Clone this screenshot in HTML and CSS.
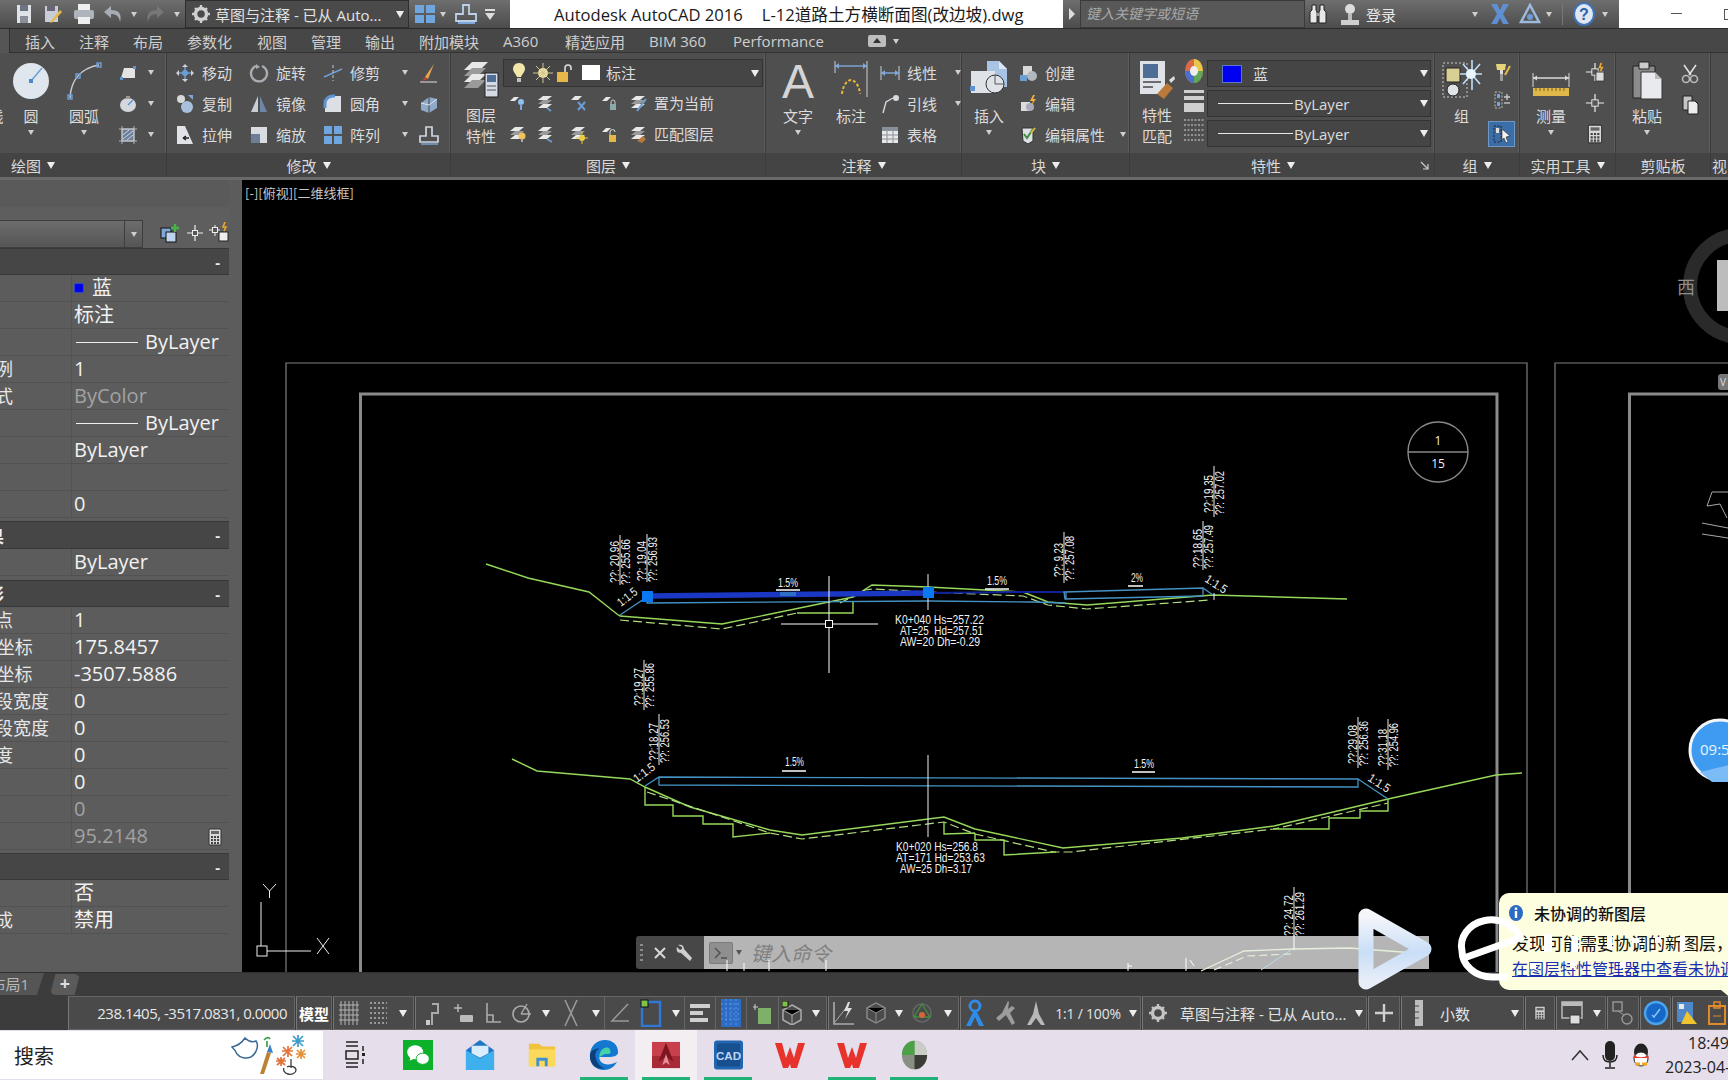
FILE: index.html
```html
<!DOCTYPE html>
<html lang="zh">
<head>
<meta charset="utf-8">
<title>Autodesk AutoCAD 2016</title>
<link rel="stylesheet" href="styles.css">
</head>
<body>
<svg class="defs" width="0" height="0">
  <symbol id="ly" viewBox="0 0 20 20"><path d="M3 7 8 3h9l-5 4z" fill="#e8e8e8"/><path d="M3 11 8 7h9l-5 4z" fill="#9a9a9a"/><path d="M3 15l5-4h9l-5 4z" fill="#e8e8e8"/></symbol>
  <symbol id="cal" viewBox="0 0 14 18"><rect x="1" y="1" width="12" height="16" rx="1" fill="#d8d8d8" stroke="#333"/><rect x="3" y="3" width="8" height="3" fill="#666"/><path d="M3 8h2v2H3zM6 8h2v2H6zM9 8h2v2H9zM3 11h2v2H3zM6 11h2v2H6zM9 11h2v2H9zM3 14h2v2H3zM6 14h2v2H6zM9 14h2v2H9z" fill="#444"/></symbol>
  <symbol id="pt" viewBox="0 0 22 22"><path d="M1 11h20M11 1v20" stroke="#eee" stroke-width="1.3"/><rect x="7.5" y="7.5" width="7" height="7" fill="#555" stroke="#eee"/></symbol>
</svg>
<div class="app">

  <header class="titlebar">
    <div class="qat">
      <span class="qi q1"><svg width="18" height="20" viewBox="0 0 18 20"><path d="M2 1h14v18H2z" fill="#dfe3e8"/><path d="M5 1h8v6H5z" fill="#6c7480"/><path d="M5 12h8v7H5z" fill="#8a8f98"/></svg></span>
      <span class="qi q2"><svg width="20" height="20" viewBox="0 0 20 20"><path d="M2 2h13v16H2z" fill="#c9ced6"/><path d="M4 2h8v5H4z" fill="#667"/><path d="m8 17 9-11 2 2-9 10-3 1z" fill="#e7b94a"/></svg></span>
      <span class="qi q3"><svg width="22" height="22" viewBox="0 0 22 22"><path d="M5 1h12v7H5z" fill="#eee"/><rect x="1" y="7" width="20" height="9" rx="2" fill="#aeb4bc"/><path d="M5 14h12v7H5z" fill="#eee"/></svg></span>
      <span class="qi q4"><svg width="22" height="20" viewBox="0 0 22 20"><path d="M9 2 2 8l7 6v-4c5 0 8 2 9 8 2-8-1-12-9-12z" fill="#a7adb5"/></svg></span>
      <span class="caret q5"></span>
      <span class="qi q6"><svg width="22" height="20" viewBox="0 0 22 20"><path d="m13 2 7 6-7 6v-4c-5 0-8 2-9 8-2-8 1-12 9-12z" fill="#777"/></svg></span>
      <span class="caret q7"></span>
      <div class="wscombo">
        <svg width="18" height="18" viewBox="0 0 18 18"><circle cx="9" cy="9" r="5.5" fill="none" stroke="#d0d0d0" stroke-width="3.5"/><path d="M9 0v3M9 15v3M0 9h3M15 9h3M3 3l2 2M13 13l2 2M15 3l-2 2M3 15l2-2" stroke="#d0d0d0" stroke-width="2.4"/></svg>
        <span class="wstext">草图与注释 - 已从 Auto...</span>
        <span class="caret white"></span>
      </div>
      <span class="qi q8"><svg width="22" height="22" viewBox="0 0 22 22"><path d="M1 2h9v8H1zM12 2h9v8h-9zM12 12h9v8h-9zM1 12h9v8H1z" fill="#6fa6e0"/></svg></span>
      <span class="caret q9"></span>
      <span class="qi q10"><svg width="24" height="22" viewBox="0 0 24 22"><path d="M9 2h6v9h7v7H2v-7h7z" fill="none" stroke="#bcd0e8" stroke-width="1.8"/><path d="M4 20h17" stroke="#7ea6d8" stroke-width="2"/></svg></span>
      <span class="downbar"></span>
    </div>
    <div class="doctitle"><span>Autodesk AutoCAD 2016</span><span class="dt-gap">L-12道路土方横断面图(改边坡).dwg</span></div>
    <div class="searchzone">
      <span class="tri-r"></span>
      <div class="keybox">键入关键字或短语</div>
      <span class="sz-ico sz1"><svg width="20" height="22" viewBox="0 0 20 22"><path d="M4 2h4v5l1 2v11H2V9l2-2zM12 2h4v5l2 2v11h-7V9l1-2z" fill="#e8e8e8" stroke="#222"/><path d="M8 10h4v3H8z" fill="#999"/></svg></span>
      <span class="sz-ico sz2"><svg width="22" height="24" viewBox="0 0 22 24"><circle cx="11" cy="7" r="5" fill="#dcdcdc"/><path d="M9 12h4v6H9z" fill="#bbb"/><path d="M2 18h18v5H2z" fill="#cfcfcf"/></svg></span>
      <span class="login">登录</span>
      <span class="caret sz3"></span>
      <span class="sz-ico sz4"><svg width="20" height="22" viewBox="0 0 20 22"><path d="M1 1h6l3 6 3-6h6l-6 10 6 10h-6l-3-6-3 6H1l6-10z" fill="#5f8fd0"/></svg></span>
      <span class="sz-ico sz5"><svg width="22" height="22" viewBox="0 0 22 22"><path d="M11 2 20 19H2z" fill="none" stroke="#9db9dc" stroke-width="2.5"/><circle cx="11" cy="14" r="3" fill="#6f9bd4"/></svg></span>
      <span class="caret sz6"></span>
      <span class="sz-sep"></span>
      <span class="sz-ico sz7"><svg width="22" height="24" viewBox="0 0 22 24"><ellipse cx="11" cy="12" rx="10" ry="11" fill="#dfe7f2" stroke="#3e72b4" stroke-width="2"/><text x="11" y="18" class="helpq">?</text></svg></span>
      <span class="caret sz8"></span>
    </div>
    <div class="winctl"><span class="mindash"></span><span class="maxbox"></span></div>
  </header>

  <nav class="tabs">
    <span class="tabhome"></span>
    <span class="tab t1">插入</span><span class="tab t2">注释</span><span class="tab t2">布局</span><span class="tab t3">参数化</span><span class="tab t2">视图</span><span class="tab t2">管理</span><span class="tab t2">输出</span><span class="tab t4">附加模块</span><span class="tab t5">A360</span><span class="tab t6">精选应用</span><span class="tab t7">BIM 360</span><span class="tab t8">Performance</span>
    <span class="tabpill"><svg width="18" height="12" viewBox="0 0 18 12"><rect width="18" height="12" rx="2" fill="#bdbdbd"/><path d="m9 3 4 5H5z" fill="#333"/></svg></span><span class="caret"></span>
  </nav>

  <section class="ribbon">
    <div class="panel p-draw">
      <div class="pbody">
        <div class="big b-pl"><div class="bico"></div><span class="blabel">多段线</span></div>
        <div class="big b-circle"><div class="bico"><svg width="38" height="38" viewBox="0 0 38 38"><circle cx="19" cy="19" r="18" fill="#dfe6ee"/><path d="M19 19 30 6" stroke="#6c9fd6" stroke-width="1.5"/><rect x="17" y="17" width="4" height="4" fill="#4f86c6"/></svg></div><span class="blabel">圆</span><span class="caret"></span></div>
        <div class="big b-arc"><div class="bico"><svg width="36" height="40" viewBox="0 0 36 40"><path d="M4 37C5 18 16 7 33 4" fill="none" stroke="#c9ced6" stroke-width="1.5"/><path d="M2 34h4v4H2zM10 13h4v4h-4zM31 2h4v4h-4z" fill="none" stroke="#6c9fd6" stroke-width="1.4"/></svg></div><span class="blabel">圆弧</span><span class="caret"></span></div>
        <div class="rows r-draw">
          <div class="tool"><svg class="i" viewBox="0 0 20 20"><path d="M3 15 6 5h11v10z" fill="#e4e4e4"/><path d="M2 14h3v3H2zM15 3h3v3h-3z" fill="#5d93d0"/></svg><span class="caret ca-draw"></span></div>
          <div class="tool"><svg class="i" viewBox="0 0 20 20"><ellipse cx="10" cy="11" rx="8" ry="7" fill="#d4d8de"/><path d="M10 11 15 6" stroke="#5d93d0" stroke-width="1.5"/><path d="M8 2h4v3H8z" fill="#999"/></svg><span class="caret ca-draw"></span></div>
          <div class="tool"><svg class="i" viewBox="0 0 20 20"><path d="M4 4h12v12H4z" fill="#6d7f99" stroke="#c8ccd2"/><path d="M5 14 15 6M5 10l6-5M9 15l6-5" stroke="#c9d4e2"/><path d="M1 4h18M1 16h18M4 1v18M16 1v18" stroke="#c8ccd2" stroke-width=".8"/></svg><span class="caret ca-draw"></span></div>
        </div>
      </div>
      <div class="ptitle">绘图<span class="caret white"></span></div>
    </div>

    <div class="panel p-mod">
      <div class="pbody">
        <div class="rows r-mod">
          <div class="tool"><svg class="i" viewBox="0 0 20 20"><path d="m10 1 3 3H7zM10 19l-3-3h6zM1 10l3-3v6zM19 10l-3 3V7z" fill="#cfd3d8"/><path d="M10 4v12M4 10h12" stroke="#6c9fd6" stroke-width="1.5"/><circle cx="10" cy="10" r="3" fill="#6c9fd6"/></svg><span>移动</span></div>
          <div class="tool"><svg class="i" viewBox="0 0 20 20"><path d="M13 3a8 8 0 1 1-6 0" fill="none" stroke="#a9adb2" stroke-width="2.4"/><path d="M7 1v5l4-2z" fill="#a9adb2"/></svg><span>旋转</span></div>
          <div class="tool"><svg class="i" viewBox="0 0 20 20"><path d="M1 14 19 6" stroke="#6c9fd6" stroke-width="1.5"/><path d="M10 2v16" stroke="#c5c9ce" stroke-dasharray="3 2"/></svg><span>修剪</span><span class="caret ca-mod"></span></div>
          <div class="tool"><svg class="i" viewBox="0 0 20 20"><path d="M15 1 6 14l3 2z" fill="#e8a84a"/><path d="M6 14 3 18l6-2z" fill="#c0492b"/><path d="M1 19h17" stroke="#e0e0e0"/></svg></div>

          <div class="tool"><svg class="i" viewBox="0 0 20 20"><circle cx="6" cy="5" r="4" fill="#d8d8d8"/><circle cx="12" cy="13" r="6" fill="#a9c0dc"/><path d="M13 1h5v5z" fill="#7fa6d4"/></svg><span>复制</span></div>
          <div class="tool"><svg class="i" viewBox="0 0 20 20"><path d="M9 2v16H2z" fill="#c9ced4"/><path d="M11 2v16h7z" fill="#6d87a8"/></svg><span>镜像</span></div>
          <div class="tool"><svg class="i" viewBox="0 0 20 20"><path d="M2 18V9c0-4 4-7 8-7h8v16z" fill="#dcdfe3"/><path d="M2 14V9c0-4 4-7 8-7h2" fill="none" stroke="#5d93d0" stroke-width="3"/></svg><span>圆角</span><span class="caret ca-mod"></span></div>
          <div class="tool"><svg class="i" viewBox="0 0 20 20"><path d="M2 9 10 3l8 2v9l-8 5-8-3z" fill="#8fa9c8"/><path d="M10 3v16" stroke="#444"/><path d="M2 9l8 2 8-6" fill="none" stroke="#dfe6ee"/></svg></div>

          <div class="tool"><svg class="i" viewBox="0 0 20 20"><path d="M2 1h8l8 18H2z" fill="#dfe3e8"/><path d="M8 13h6M8 13l3-2M8 13l3 2" stroke="#222" stroke-width="1.5"/></svg><span>拉伸</span></div>
          <div class="tool"><svg class="i" viewBox="0 0 20 20"><path d="M2 2h16v16H2z" fill="#d9dde2"/><path d="M2 9h9v9H2z" fill="#6c7f96"/></svg><span>缩放</span></div>
          <div class="tool"><svg class="i" viewBox="0 0 20 20"><path d="M1 1h8v8H1zM11 1h8v8h-8zM1 11h8v8H1zM11 11h8v8h-8z" fill="#6fa6e0"/></svg><span>阵列</span><span class="caret ca-mod"></span></div>
          <div class="tool"><svg class="i" viewBox="0 0 20 20"><path d="M7 2h6v9h6v6H1v-6h6z" fill="none" stroke="#cfd6de" stroke-width="1.7"/><path d="M2 19h17" stroke="#7ea6d8" stroke-width="1.4"/></svg></div>
        </div>
      </div>
      <div class="ptitle">修改<span class="caret white"></span></div>
    </div>

    <div class="panel p-lay">
      <div class="pbody">
        <div class="big b-lay"><div class="bico"><svg width="36" height="38" viewBox="0 0 36 38"><path d="M1 10 9 2h16l-8 8z" fill="#e8e8e8"/><path d="M1 16l8-8h14l-8 8z" fill="#9a9a9a"/><path d="M1 22l8-8h14l-8 8z" fill="#e8e8e8"/><path d="M1 28l8-8h14l-8 8z" fill="#9a9a9a"/><rect x="22" y="13" width="13" height="24" fill="#d4dbe4" stroke="#222"/><rect x="24" y="15" width="9" height="7" fill="#4f6e96"/><path d="M24 26h9M24 30h9" stroke="#555"/></svg></div><span class="blabel two">图层<br>特性</span></div>
        <div class="laycol">
          <div class="laycombo">
            <svg class="lc1" width="14" height="22" viewBox="0 0 14 22"><path d="M7 1C3 1 1 4 1 7c0 3 3 5 4 8h4c1-3 4-5 4-8 0-3-2-6-6-6z" fill="#f2e6a8"/><path d="M5 16h4v4H5z" fill="#bfbfbf"/></svg>
            <svg class="lc2" width="20" height="20" viewBox="0 0 20 20"><circle cx="10" cy="10" r="5" fill="#efe2a2"/><path d="M10 0v20M0 10h20M3 3l14 14M17 3 3 17" stroke="#cfc68e"/></svg>
            <svg class="lc3" width="16" height="20" viewBox="0 0 16 20"><rect x="1" y="9" width="11" height="10" fill="#e6b64a"/><path d="M9 9V5a3 3 0 0 1 6 0v2" fill="none" stroke="#ddd" stroke-width="1.6"/></svg>
            <span class="lc-sq"></span><span class="lc-t">标注</span><span class="caret white lc-c"></span>
          </div>
          <div class="layrow">
            <svg class="i" viewBox="0 0 20 20"><path d="M3 8 7 4h5L8 8z" fill="#e8e8e8"/><circle cx="14" cy="9" r="3" fill="#8fc0ee"/><path d="M13 11h2v6h-2z" fill="#7fa6d4"/></svg>
            <svg class="i" viewBox="0 0 20 20"><use href="#ly"/><path d="m12 15 4 3" stroke="#6c9fd6" stroke-width="1.6"/></svg>
            <svg class="i" viewBox="0 0 20 20"><path d="M3 7 7 3h7l-4 4z" fill="#e8e8e8"/><path d="M10 9 17 17M17 9l-7 8" stroke="#6c9fd6" stroke-width="2"/></svg>
            <svg class="i" viewBox="0 0 20 20"><path d="M3 8 7 4h5L8 8z" fill="#e8e8e8"/><rect x="11" y="11" width="6" height="6" fill="#8aa"/><path d="M12 11V9a2 2 0 0 1 4 0v2" fill="none" stroke="#ccc"/></svg>
            <svg class="i" viewBox="0 0 20 20"><use href="#ly"/><path d="m9 18 9-12" stroke="#6c9fd6" stroke-width="2"/></svg>
            <span>置为当前</span>
          </div>
          <div class="layrow">
            <svg class="i" viewBox="0 0 20 20"><use href="#ly"/><circle cx="15" cy="12" r="3.5" fill="#efc35a"/><path d="M14 15h2v3h-2z" fill="#aaa"/></svg>
            <svg class="i" viewBox="0 0 20 20"><use href="#ly"/><path d="m12 15 5 3" stroke="#6c9fd6" stroke-width="1.8"/></svg>
            <svg class="i" viewBox="0 0 20 20"><use href="#ly"/><circle cx="14" cy="14" r="3" fill="#f0d04a"/><path d="M14 8v12M8 14h12" stroke="#e8c83a"/></svg>
            <svg class="i" viewBox="0 0 20 20"><path d="M3 8 7 4h5L8 8z" fill="#e8e8e8"/><rect x="10" y="11" width="7" height="7" fill="#e6b64a"/><path d="M11 11V8a2.5 2.5 0 0 1 5 0" fill="none" stroke="#ddd"/></svg>
            <svg class="i" viewBox="0 0 20 20"><use href="#ly"/><path d="m9 17 6-5 3 3-4 4z" fill="#b9793a"/></svg>
            <span>匹配图层</span>
          </div>
        </div>
      </div>
      <div class="ptitle">图层<span class="caret white"></span></div>
    </div>

    <div class="panel p-ann">
      <div class="pbody">
        <div class="big b-a"><div class="bico"><span class="bigA">A</span></div><span class="blabel">文字</span><span class="caret"></span></div>
        <div class="big b-dim"><div class="bico"><svg width="34" height="38" viewBox="0 0 34 38"><path d="M1 6h32" stroke="#7ea6d8" stroke-width="1.4"/><path d="M1 1v12M33 1v36" stroke="#c9ced6"/><path d="M1 6l4-3v6zM33 6l-4-3v6z" fill="#7ea6d8"/><path d="M8 34c1-10 6-14 9-14s8 4 9 14" fill="none" stroke="#e8b83a" stroke-width="2" stroke-dasharray="3 2"/></svg></div><span class="blabel">标注</span></div>
        <div class="rows r-ann">
          <div class="tool"><svg class="i" viewBox="0 0 20 20"><path d="M1 3v14M19 3v14" stroke="#c9ced6"/><path d="M1 10h18" stroke="#7ea6d8" stroke-width="1.5"/><path d="m1 10 4-3v6zM19 10l-4-3v6z" fill="#7ea6d8"/></svg><span>线性</span><span class="caret ca-ann"></span></div>
          <div class="tool"><svg class="i" viewBox="0 0 20 20"><path d="M3 19 6 8l7-4" fill="none" stroke="#d4d8de" stroke-width="1.4"/><circle cx="16" cy="4" r="3" fill="#d8dbe0"/></svg><span>引线</span><span class="caret ca-ann"></span></div>
          <div class="tool"><svg class="i" viewBox="0 0 20 20"><rect x="2" y="2" width="16" height="16" fill="#e6e8ea"/><path d="M2 2h16v4H2z" fill="#8a9098"/><path d="M7 6v12M13 6v12M2 10h16M2 14h16" stroke="#8a9098"/></svg><span>表格</span></div>
        </div>
      </div>
      <div class="ptitle">注释<span class="caret white"></span></div>
    </div>

    <div class="panel p-blk">
      <div class="pbody">
        <div class="big b-ins"><div class="bico"><svg width="40" height="36" viewBox="0 0 40 36"><path d="M18 1h12l8 8v18H18z" fill="#a8c3e4"/><path d="M30 1v8h8" fill="#dce6f2"/><path d="M2 11h24v22H2z" fill="#dfe2e6"/><circle cx="26" cy="24" r="9" fill="#dfe2e6" stroke="#333"/><path d="M26 24V15M26 24h9" stroke="#555"/><rect x="1" y="26" width="5" height="5" fill="#5d93d0"/></svg></div><span class="blabel">插入</span><span class="caret"></span></div>
        <div class="rows r-blk">
          <div class="tool"><svg class="i" viewBox="0 0 20 20"><path d="M5 3h9v9H5z" fill="#d8d8d8"/><circle cx="14" cy="13" r="5" fill="#b3b8be"/><rect x="2" y="12" width="7" height="6" fill="#6c9fd6"/></svg><span>创建</span></div>
          <div class="tool"><svg class="i" viewBox="0 0 20 20"><path d="M3 8h9v9H3z" fill="#dcdcdc"/><circle cx="12" cy="13" r="4" fill="#aab"/><path d="M15 1 12 7h3l-2 5 5-7h-3l2-4z" fill="#f0b23a"/></svg><span>编辑</span></div>
          <div class="tool"><svg class="i" viewBox="0 0 20 20"><path d="M4 3h11v13l-5 3-5-3z" fill="#dde0e4" stroke="#333"/><path d="m6 9 3 4 6-9" fill="none" stroke="#3f8f3f" stroke-width="2"/><path d="m13 8 4-5" stroke="#e5b43b" stroke-width="2"/></svg><span>编辑属性</span><span class="caret ca-blk"></span></div>
        </div>
      </div>
      <div class="ptitle">块<span class="caret white"></span></div>
    </div>

    <div class="panel p-prop">
      <div class="pbody">
        <div class="big b-match"><div class="bico"><svg width="36" height="40" viewBox="0 0 36 40"><path d="M1 1h25v33H1z" fill="#dfe3e8"/><path d="M4 4h15v14H4z" fill="#4f6e96"/><path d="M4 22h18M4 27h10" stroke="#444" stroke-width="1.4"/><path d="m18 34 10-11 6 5-9 11z" fill="#b9793a"/><path d="m30 20 5-4 1 3-4 4z" fill="#ddd"/></svg></div><span class="blabel two">特性<br>匹配</span></div>
        <div class="pswatch">
          <svg width="20" height="26" viewBox="0 0 20 26"><ellipse cx="10" cy="13" rx="9" ry="12" fill="#d96a4a"/><path d="M10 13V1a9 12 0 0 1 9 12z" fill="#e8c84a"/><path d="M10 13h9a9 12 0 0 1-9 12z" fill="#5fa85a"/><path d="M10 13v12a9 12 0 0 1-9-12z" fill="#4a6fd0"/><ellipse cx="10" cy="13" rx="4" ry="5" fill="#eee"/></svg>
          <svg width="20" height="24" viewBox="0 0 20 24"><path d="M0 1h20v3H0zM0 7h20v4H0zM0 14h20v9H0z" fill="#cfcfcf"/></svg>
          <svg width="20" height="24" viewBox="0 0 20 24"><path d="M0 2h20M0 7h20M0 12h20M0 17h20M0 22h20" stroke="#aaa" stroke-width="1.6" stroke-dasharray="2 1.5"/></svg>
        </div>
        <div class="combos">
          <div class="combo"><span class="bluesq"></span><span class="cb-t">蓝</span><span class="caret white cb-c"></span></div>
          <div class="combo"><span class="cb-line"></span><span class="cb-bl">ByLayer</span><span class="caret white cb-c"></span></div>
          <div class="combo"><span class="cb-line"></span><span class="cb-bl">ByLayer</span><span class="caret white cb-c"></span></div>
        </div>
      </div>
      <div class="ptitle">特性<span class="caret white"></span><svg class="launch" width="9" height="9" viewBox="0 0 9 9"><path d="M1 1 8 8M8 3v5H3" fill="none" stroke="#ccc" stroke-width="1.2"/></svg></div>
    </div>

    <div class="panel p-grp">
      <div class="pbody">
        <div class="big b-grp"><div class="bico"><svg width="40" height="40" viewBox="0 0 40 40"><path d="M1 3h24v34H1z" fill="none" stroke="#ccc" stroke-dasharray="2 2"/><path d="M4 8h14v14H4z" fill="#d8cf92" stroke="#222"/><circle cx="11" cy="30" r="6" fill="#dfe3e8" stroke="#222"/><path d="M30 0v30M18 14h22M21 4l17 20M38 4 21 24" stroke="#bfe0fa" stroke-width="1.6"/><circle cx="29" cy="14" r="5" fill="#e8f5ff"/></svg></div><span class="blabel">组</span></div>
        <div class="grpcol">
          <svg class="i" viewBox="0 0 20 20"><path d="M4 2h10l-1 6H5z" fill="#e7d47a"/><path d="M8 8h3v4H8z" fill="#ddd"/><path d="M8 12h3v7H8z" fill="#999"/><path d="m13 13 5-9" stroke="#e7b94a" stroke-width="2"/></svg>
          <svg class="i" viewBox="0 0 20 20"><path d="M3 2h7v16H3z" fill="none" stroke="#bbb" stroke-dasharray="2 1.5"/><path d="M5 4h3v4H5zM5 12h3v4H5z" fill="#6fa6e0"/><path d="M12 7h6M15 4v6" stroke="#ccc" stroke-width="1.3"/><path d="M12 13h6" stroke="#ccc" stroke-width="1.3"/></svg>
          <span class="grp-on"><svg class="i" viewBox="0 0 20 20"><path d="M2 2h7v16H2z" fill="none" stroke="#222" stroke-dasharray="2 1.5"/><path d="M4 4h3v5H4z" fill="#ddd"/><path d="m10 5 8 7-4 1 2 5-2 1-2-5-2 2z" fill="#f2f2f2" stroke="#222" stroke-width=".6"/></svg></span>
        </div>
      </div>
      <div class="ptitle">组<span class="caret white"></span></div>
    </div>

    <div class="panel p-util">
      <div class="pbody">
        <div class="big b-meas"><div class="bico"><svg width="38" height="30" viewBox="0 0 38 30"><path d="M1 5v14M37 5v14" stroke="#d8d8d8"/><path d="M1 10h36" stroke="#d8d8d8" stroke-width="1.3"/><path d="m1 10 4-2.5v5zM37 10l-4-2.5v5z" fill="#d8d8d8"/><rect x="1" y="20" width="36" height="8" fill="#e0b84a"/><path d="M4 20v3M8 20v3M12 20v3M16 20v3M20 20v3M24 20v3M28 20v3M32 20v3" stroke="#7a5f1e"/></svg></div><span class="blabel">测量</span><span class="caret"></span></div>
        <div class="utilcol">
          <svg class="i" viewBox="0 0 22 22"><use href="#pt"/><rect x="12" y="11" width="9" height="10" fill="#ddd" stroke="#333"/><path d="M18 1 16 6h3l-2 4" fill="none" stroke="#eea72e" stroke-width="1.8"/></svg>
          <svg class="i" viewBox="0 0 22 22"><use href="#pt"/></svg>
          <svg class="i" viewBox="0 0 14 18"><use href="#cal"/></svg>
        </div>
      </div>
      <div class="ptitle">实用工具<span class="caret white"></span></div>
    </div>

    <div class="panel p-clip">
      <div class="pbody">
        <div class="big b-paste"><div class="bico"><svg width="32" height="40" viewBox="0 0 32 40"><path d="M2 6h22v32H2z" fill="#8b8b8b" stroke="#222"/><path d="M8 2h10v7H8z" fill="#ccc" stroke="#222"/><path d="M10 12h14l7 7v20H10z" fill="#e8eaed" stroke="#333"/><path d="M24 12v7h7" fill="#bbb"/></svg></div><span class="blabel">粘贴</span><span class="caret"></span></div>
        <div class="clipcol">
          <svg class="i" viewBox="0 0 20 20"><path d="M4 1l7 10M16 1 9 11" stroke="#dfdfdf" stroke-width="1.6"/><circle cx="6" cy="15" r="3.5" fill="none" stroke="#bbb" stroke-width="1.6"/><circle cx="14" cy="15" r="3.5" fill="none" stroke="#bbb" stroke-width="1.6"/></svg>
          <svg class="i" viewBox="0 0 20 20"><path d="M3 1h9v14H3z" fill="#c5c5c5" stroke="#222"/><path d="M8 6h7l3 3v10H8z" fill="#eee" stroke="#222"/></svg>
        </div>
      </div>
      <div class="ptitle">剪贴板</div>
    </div>

    <div class="panel p-view"><div class="pbody"></div><div class="ptitle">视图</div></div>
  </section>
  <div class="strip"></div>

  <main class="workspace">
    <aside class="palette">
      <div class="pal-top">
        <div class="pal-combo"><span class="pal-drop"><span class="caret"></span></span></div>
        <svg class="pal-i1" width="20" height="20" viewBox="0 0 20 20"><rect x="1" y="5" width="10" height="10" fill="#7ea6d8" stroke="#111"/><rect x="6" y="9" width="10" height="10" fill="#bcd3ee" stroke="#111"/><path d="M15 1v8M11 5h8" stroke="#49b04a" stroke-width="2.4"/></svg>
        <svg class="pal-i2" width="16" height="16" viewBox="0 0 16 16"><path d="M0 8h16M8 0v16" stroke="#eee" stroke-width="1.2"/><rect x="5.5" y="5.5" width="5" height="5" fill="#555" stroke="#eee"/></svg>
        <svg class="pal-i3" width="20" height="20" viewBox="0 0 20 20"><path d="M0 8h11M6 3v11" stroke="#eee"/><rect x="3.500" y="5.500" width="5" height="5" fill="#555" stroke="#eee"/><rect x="10" y="10" width="9" height="9" fill="#eee" stroke="#222"/><path d="M16 0 14 5h3l-2 4" fill="none" stroke="#eea72e" stroke-width="1.6"/></svg>
      </div>
      <div class="sec-h"><span class="sh-l">常规</span><b>-</b></div>
      <div class="prow"><span class="pk">颜色</span><span class="pv"><i class="pblue"></i>蓝</span></div>
      <div class="prow"><span class="pk">图层</span><span class="pv">标注</span></div>
      <div class="prow"><span class="pk">线型</span><span class="pv"><i class="pline"></i>ByLayer</span></div>
      <div class="prow"><span class="pk">线型比例</span><span class="pv">1</span></div>
      <div class="prow"><span class="pk">打印样式</span><span class="pv dim">ByColor</span></div>
      <div class="prow"><span class="pk">线宽</span><span class="pv"><i class="pline"></i>ByLayer</span></div>
      <div class="prow"><span class="pk">透明度</span><span class="pv">ByLayer</span></div>
      <div class="prow"><span class="pk">超链接</span><span class="pv"></span></div>
      <div class="prow"><span class="pk">厚度</span><span class="pv">0</span></div>
      <div class="sec-h sec-a"><span class="sh-l">三维效果</span><b>-</b></div>
      <div class="prow"><span class="pk">材质</span><span class="pv">ByLayer</span></div>
      <div class="sec-h sec-b"><span class="sh-l">几何图形</span><b>-</b></div>
      <div class="prow"><span class="pk">当前顶点</span><span class="pv">1</span></div>
      <div class="prow"><span class="pk">顶点 X 坐标</span><span class="pv">175.8457</span></div>
      <div class="prow"><span class="pk">顶点 Y 坐标</span><span class="pv">-3507.5886</span></div>
      <div class="prow"><span class="pk">起始线段宽度</span><span class="pv">0</span></div>
      <div class="prow"><span class="pk">终止线段宽度</span><span class="pv">0</span></div>
      <div class="prow"><span class="pk">全局宽度</span><span class="pv">0</span></div>
      <div class="prow"><span class="pk">标高</span><span class="pv">0</span></div>
      <div class="prow"><span class="pk">面积</span><span class="pv dim">0</span></div>
      <div class="prow"><span class="pk">长度</span><span class="pv dim">95.2148</span><svg class="pcalc" width="14" height="18" viewBox="0 0 14 18"><use href="#cal"/></svg></div>
      <div class="sec-h sec-gap"><span class="sh-l">其他</span><b>-</b></div>
      <div class="prow"><span class="pk">闭合</span><span class="pv">否</span></div>
      <div class="prow"><span class="pk">线型生成</span><span class="pv">禁用</span></div>
    </aside>

    <div class="canvas">
      <svg class="draw" width="1486" height="792" viewBox="242 180 1486 792">
        <text x="245" y="198" class="vplabel">[-][俯视][二维线框]</text>
        <!-- sheet frames -->
        <g class="frame-thin"><path d="M286 972V363H1527V972M1555 972V363H1728"/></g>
        <g class="frame-bold"><path d="M360.500 972V394H1497V972M1629.500 972V394H1728"/></g>
        <!-- section number -->
        <circle cx="1438" cy="452" r="30" class="num"/><path d="M1408 452h60" class="num"/>
        <text x="1438" y="445" class="numt">1</text><text x="1438" y="468" class="numt">15</text>
        <!-- view cube -->
        <circle cx="1741" cy="286" r="51" class="ring"/>
        <text x="1677" y="294" class="west">西</text>
        <rect x="1717" y="260" width="20" height="51" class="cube"/>
        <rect x="1718" y="374" width="14" height="16" rx="3" class="vbtn"/>
        <text x="1720" y="386" class="vbtnt">V</text>
        <!-- right sheet fragment -->
        <path d="M1728 492h-16l-5 14 13-2 7 14M1702 523l26 5M1702 534l26 4" class="frag"/>
        <!-- UCS -->
        <g class="ucs"><path d="M261 902V946M267 951h44"/><rect x="257" y="946" width="10" height="10"/></g>
        <path d="M263 884l6.500 7 6.500-7M269.500 891v7M317 938l12 16M329 938l-12 16" class="ucs2"/>

        <!-- section K0+040 -->
        <path d="M486 564 528 578 589 592 617 614 620 616 722 624 853 597 872 585 928 587 1023 592 1048 602 1087 605 1213 595 1347 599" class="g"/>
        <path d="M620 620 722 629 797 613M840 603 865 590 873 589 928 592 1023 596 1048 605 1087 609 1210 600" class="gd"/>
        <path d="M797 613H853V602" class="g"/>
        <path d="M647 596 928 593" class="sel"/>
        <path d="M928 593 1023 592 1064 592" class="sel2"/>
        <path d="M620 615 647 597V603L928 601 1033 602 1065 603M1064 592 1203 588V596L1065 599ZM1066 592V599M1203 588 1213 595" class="b"/>
        <rect x="780" y="592" width="16" height="4" class="patch"/>
        <rect x="642" y="591" width="11" height="11" class="grip"/><rect x="923" y="587" width="11" height="11" class="grip"/>
        <path d="M928 574V587M928 598V610M620 535V585M647 534V582M1064 532V583M1203 521V570M1214 466V517M1214 593V600" class="w"/>
        <path d="M776 590H800M985 589H1009M1128 586H1143" class="w2"/>
        <text x="778" y="587" textLength="20" lengthAdjust="spacingAndGlyphs" class="dt">1.5%</text>
        <text x="987" y="585" textLength="20" lengthAdjust="spacingAndGlyphs" class="dt">1.5%</text>
        <text x="1131" y="582" textLength="12" lengthAdjust="spacingAndGlyphs" class="dt">2%</text>
        <text transform="translate(621 607) rotate(-38)" textLength="22" lengthAdjust="spacingAndGlyphs" class="dt">1:1.5</text>
        <text transform="translate(1204 581) rotate(33)" textLength="24" lengthAdjust="spacingAndGlyphs" class="dt">1:1.5</text>
        <text transform="translate(619 583) rotate(-90)" textLength="42" lengthAdjust="spacingAndGlyphs" class="dt">??: 20.96</text>
        <text transform="translate(630 585) rotate(-90)" textLength="46" lengthAdjust="spacingAndGlyphs" class="dt">??: 255.66</text>
        <text transform="translate(646 581) rotate(-90)" textLength="40" lengthAdjust="spacingAndGlyphs" class="dt">??: 19.04</text>
        <text transform="translate(657 582) rotate(-90)" textLength="45" lengthAdjust="spacingAndGlyphs" class="dt">??: 256.93</text>
        <text transform="translate(1063 577) rotate(-90)" textLength="34" lengthAdjust="spacingAndGlyphs" class="dt">??: 9.23</text>
        <text transform="translate(1074 581) rotate(-90)" textLength="45" lengthAdjust="spacingAndGlyphs" class="dt">??: 257.08</text>
        <text transform="translate(1202 568) rotate(-90)" textLength="39" lengthAdjust="spacingAndGlyphs" class="dt">??:18.65</text>
        <text transform="translate(1213 569) rotate(-90)" textLength="44" lengthAdjust="spacingAndGlyphs" class="dt">??: 257.49</text>
        <text transform="translate(1213 513) rotate(-90)" textLength="38" lengthAdjust="spacingAndGlyphs" class="dt">??:19.35</text>
        <text transform="translate(1224 515) rotate(-90)" textLength="44" lengthAdjust="spacingAndGlyphs" class="dt">??: 257.02</text>
        <text x="895" y="624" textLength="89" lengthAdjust="spacingAndGlyphs" class="dt">K0+040 Hs=257.22</text>
        <text x="900" y="635" textLength="83" lengthAdjust="spacingAndGlyphs" class="dt">AT=25  Hd=257.51</text>
        <text x="900" y="646" textLength="80" lengthAdjust="spacingAndGlyphs" class="dt">AW=20 Dh=-0.29</text>
        <!-- crosshair -->
        <path d="M781 624H825.500M832.500 624H878M829 576V620.500M829 627.500V673" class="ch"/>
        <rect x="825.500" y="620.500" width="7" height="7" class="chb"/>

        <!-- section K0+020 -->
        <path d="M512 759 537 771 630 779 645 787 690 807 770 830 802 835 944 817 975 829 1063 848 1182 838 1274 826 1388 799 1496 775 1522 773" class="g"/>
        <path d="M647 792 770 833 802 839 944 822 975 834 1054 852 1071 852 1274 829 1388 803" class="gd"/>
        <path d="M645 787V805H673V816H703V824H733V837L770 833M944 822V834L975 833M975 833V840H1004V855L1056 852M1273 829H1329V818H1360V811H1388V799" class="g"/>
        <path d="M645 786 659 777 1358 779V787L659 785V777M1358 779 1388 799" class="b"/>
        <path d="M928 755V837M644 660V710M659 714V765M1358 717V768M1388 719V770" class="w"/>
        <path d="M782 771H806M1132 772H1155" class="w2"/>
        <text x="785" y="766" textLength="19" lengthAdjust="spacingAndGlyphs" class="dt">1.5%</text>
        <text x="1134" y="768" textLength="20" lengthAdjust="spacingAndGlyphs" class="dt">1.5%</text>
        <text transform="translate(637 783) rotate(-37)" textLength="24" lengthAdjust="spacingAndGlyphs" class="dt">1:1.5</text>
        <text transform="translate(1367 780) rotate(33)" textLength="24" lengthAdjust="spacingAndGlyphs" class="dt">1:1.5</text>
        <text transform="translate(643 706) rotate(-90)" textLength="38" lengthAdjust="spacingAndGlyphs" class="dt">??:19.27</text>
        <text transform="translate(654 708) rotate(-90)" textLength="45" lengthAdjust="spacingAndGlyphs" class="dt">??: 255.86</text>
        <text transform="translate(658 761) rotate(-90)" textLength="38" lengthAdjust="spacingAndGlyphs" class="dt">??:18.27</text>
        <text transform="translate(669 763) rotate(-90)" textLength="44" lengthAdjust="spacingAndGlyphs" class="dt">??: 256.53</text>
        <text transform="translate(1357 764) rotate(-90)" textLength="39" lengthAdjust="spacingAndGlyphs" class="dt">??:29.08</text>
        <text transform="translate(1368 766) rotate(-90)" textLength="45" lengthAdjust="spacingAndGlyphs" class="dt">??: 256.36</text>
        <text transform="translate(1387 766) rotate(-90)" textLength="37" lengthAdjust="spacingAndGlyphs" class="dt">??:31.18</text>
        <text transform="translate(1398 767) rotate(-90)" textLength="44" lengthAdjust="spacingAndGlyphs" class="dt">??: 254.96</text>
        <text x="896" y="851" textLength="82" lengthAdjust="spacingAndGlyphs" class="dt">K0+020 Hs=256.8</text>
        <text x="896" y="862" textLength="89" lengthAdjust="spacingAndGlyphs" class="dt">AT=171 Hd=253.63</text>
        <text x="900" y="873" textLength="72" lengthAdjust="spacingAndGlyphs" class="dt">AW=25 Dh=3.17</text>

        <!-- next section -->
        <path d="M1294 887V936" class="w"/>
        <text transform="translate(1293 936) rotate(-90)" textLength="41" lengthAdjust="spacingAndGlyphs" class="dt">??: 24.72</text>
        <text transform="translate(1304 936) rotate(-90)" textLength="44" lengthAdjust="spacingAndGlyphs" class="dt">??: 261.29</text>

        <!-- clock bubble -->
        <circle cx="1720" cy="750" r="30" class="clk"/>
        <path d="M1700 772 1750 760V782H1712Z" class="clk2"/>
        <text x="1700" y="755" class="clkt">09:5</text>
      </svg>

      <div class="cmd">
        <div class="cmd-dark">
          <span class="cmd-grip"></span>
          <svg width="14" height="14" viewBox="0 0 14 14"><path d="M2 2l10 10M12 2 2 12" stroke="#d8d8d8" stroke-width="2"/></svg>
          <svg width="20" height="20" viewBox="0 0 20 20"><path d="M3 2c3-1 6 0 6 4l8 9-2 3-9-8c-4 0-5-3-4-6l3 3 2-1 0-2z" fill="#cfcfcf"/></svg>
        </div>
        <div class="cmd-light">
          <span class="cmd-ico"><svg width="18" height="18" viewBox="0 0 18 18"><path d="M3 4l5 5-5 5" fill="none" stroke="#555" stroke-width="1.6"/><path d="M9 14h6" stroke="#555" stroke-width="1.6"/></svg></span>
          <span class="caret cmd-c"></span>
          <span class="cmd-t">键入命令</span>
        </div>
      </div>
    </div>
  </main>

  <div class="layouttabs">
    <span class="lt-tab">布局1</span>
    <span class="lt-plus">+</span>
  </div>

  <footer class="statusbar">
    <div class="sg w228 coords">238.1405, -3517.0831, 0.0000</div>
    <div class="sg w36 model">模型</div>
    <div class="sg">
      <span class="sc w31"><svg width="20" height="24" viewBox="0 0 20 24"><path d="M2 0v24M6 0v24M10 0v24M14 0v24M18 0v24M0 4h20M0 9h20M0 14h20M0 19h20" stroke="#b4b4b4"/></svg></span>
      <span class="sc w28"><svg width="20" height="24" viewBox="0 0 20 24"><path d="M2 2h17M2 7h17M2 12h17M2 17h17M2 22h17" stroke="#999" stroke-width="2" stroke-dasharray="2 2"/></svg></span>
      <span class="sc w22"><span class="caret white"></span></span>
    </div>
    <div class="sg">
      <span class="sc w34"><svg width="16" height="26" viewBox="0 0 16 26"><path d="M8 4h6v9H8v12" fill="none" stroke="#aaa" stroke-width="2"/><path d="M2 20h4v5H2z" fill="#ccc"/></svg></span>
      <span class="sc w30"><svg width="20" height="24" viewBox="0 0 20 24"><path d="M4 3v8M0 7h8" stroke="#bbb" stroke-width="1.4"/><rect x="6" y="14" width="13" height="7" rx="1" fill="#bbb"/></svg></span>
      <span class="sc w27"><svg width="18" height="24" viewBox="0 0 18 24"><path d="M3 2v19h14M3 14h6v7" fill="none" stroke="#aaa" stroke-width="1.6"/></svg></span>
      <span class="sc w31"><svg width="20" height="22" viewBox="0 0 20 22"><circle cx="9" cy="12" r="8" fill="none" stroke="#aaa" stroke-width="1.6"/><path d="M9 12h10M9 12 15 2" stroke="#aaa" stroke-width="1.4"/></svg></span>
      <span class="sc w18"><span class="caret white"></span></span>
      <span class="sc w32"><svg width="18" height="28" viewBox="0 0 18 28"><path d="M3 1 15 27M15 1 3 27" stroke="#999" stroke-width="1.6"/></svg></span>
      <span class="sc w17"><span class="caret white"></span></span>
      <span class="sc w30 bl"><svg width="20" height="22" viewBox="0 0 20 22"><path d="M18 2 2 19h17" fill="none" stroke="#999" stroke-width="1.5"/></svg></span>
      <span class="sc w33"><svg width="22" height="28" viewBox="0 0 22 28"><rect x="2" y="3" width="18" height="24" fill="none" stroke="#2f78d8" stroke-width="2.400"/><rect x="1" y="1" width="7" height="7" fill="#7ec24a" stroke="#111"/></svg></span>
      <span class="sc w17"><span class="caret white"></span></span>
      <span class="sc w31 bl"><svg width="22" height="20" viewBox="0 0 22 20"><path d="M1 1h20v4H1zM1 8h13v4H1zM1 15h18v4H1z" fill="#cfcfcf"/></svg></span>
      <span class="sc w31 bl"><svg width="20" height="28" viewBox="0 0 20 28"><rect width="20" height="28" fill="#2d6cc6"/><path d="M0 5h20M0 10h20M0 15h20M0 20h20M5 0v28M10 0v28M15 0v28" stroke="#5d93d8" stroke-dasharray="2 2"/></svg></span>
      <span class="sc w32 bl"><svg width="20" height="24" viewBox="0 0 20 24"><path d="M5 7h13v16H5z" fill="#7fb06a"/><path d="M2 3v6M0 6h5" stroke="#ccc"/></svg></span>
      <span class="sc w26 bl"><svg width="20" height="24" viewBox="0 0 20 24"><path d="M10 4 19 9v10l-9 5-9-5V9z" fill="none" stroke="#aaa" stroke-width="1.5"/><path d="M1 9l9 5 9-5M10 14v10" stroke="#aaa"/><rect y="0" width="6" height="6" fill="#7ec24a" stroke="#111"/></svg></span>
      <span class="sc w23"><span class="caret white"></span></span>
    </div>
    <div class="sg">
      <span class="sc w32"><svg width="24" height="26" viewBox="0 0 24 26"><path d="M2 2v22h20" fill="none" stroke="#aaa" stroke-width="1.6"/><path d="M3 22 14 8" stroke="#aaa"/><path d="m16 2-4 9h4l-3 8 7-11h-4l2-6z" fill="#ddd"/></svg></span>
      <span class="sc w31"><svg width="20" height="22" viewBox="0 0 20 22"><path d="M10 1 19 6v10l-9 5-9-5V6z" fill="none" stroke="#8d8d8d" stroke-width="1.4"/><path d="M1 6l9 5 9-5M10 11v10" stroke="#8d8d8d"/></svg></span>
      <span class="sc w16"><span class="caret white"></span></span>
      <span class="sc w29"><svg width="20" height="22" viewBox="0 0 20 22"><circle cx="10" cy="11" r="9" fill="none" stroke="#666" stroke-width="1.5"/><path d="M10 2 18 15H2z" fill="none" stroke="#3f8f3f" stroke-width="1.4"/><circle cx="10" cy="13" r="3" fill="#d8653a"/></svg></span>
      <span class="sc w23"><span class="caret white"></span></span>
    </div>
    <div class="sg">
      <span class="sc w30"><svg width="22" height="28" viewBox="0 0 22 28"><circle cx="11" cy="7" r="5" fill="none" stroke="#2f8be6" stroke-width="3"/><path d="M10 11 2 27h5l4-9 4 9h5L12 11z" fill="#2f8be6"/></svg></span>
      <span class="sc w31"><svg width="22" height="26" viewBox="0 0 22 26"><path d="M13 1 7 13l-6 5 3 3 7-6 6 10 3-2-5-10 5-5-3-2-4 3 1-7z" fill="#9c9c9c"/></svg></span>
      <span class="sc w30"><svg width="20" height="26" viewBox="0 0 20 26"><path d="M10 1 13 14l6 11h-4l-5-7-5 7H1l6-11z" fill="#b8b8b8"/></svg></span>
      <span class="sc w74 stxt zoomt">1:1 / 100%</span>
      <span class="sc w16"><span class="caret white"></span></span>
    </div>
    <div class="sg">
      <span class="sc w32"><svg width="18" height="18" viewBox="0 0 18 18"><circle cx="9" cy="9" r="5.500" fill="none" stroke="#c4c4c4" stroke-width="3.400"/><path d="M9 0v3M9 15v3M0 9h3M15 9h3M3 3l2 2M13 13l2 2M15 3l-2 2M3 15l2-2" stroke="#c4c4c4" stroke-width="2.400"/></svg></span>
      <span class="sc w177 stxt left">草图与注释 - 已从 Auto...</span>
      <span class="sc w16"><span class="caret white"></span></span>
    </div>
    <div class="sg"><span class="sc w32"><svg width="20" height="20" viewBox="0 0 20 20"><path d="M10 1v18M1 10h18" stroke="#cfcfcf" stroke-width="2.400"/></svg></span></div>
    <div class="sg">
      <span class="sc w36"><svg width="8" height="26" viewBox="0 0 8 26"><rect width="8" height="26" fill="#bdbdbd"/><path d="M0 6h4M0 12h4M0 18h4" stroke="#444"/></svg></span>
      <span class="sc w68 stxt left3">小数</span>
      <span class="sc w19"><span class="caret white"></span></span>
    </div>
    <div class="sg"><span class="sc w30"><svg width="12" height="16" viewBox="0 0 14 18"><use href="#cal"/></svg></span></div>
    <div class="sg">
      <span class="sc w31"><svg width="22" height="24" viewBox="0 0 22 24"><rect x="1" y="1" width="20" height="16" fill="none" stroke="#bbb" stroke-width="1.500"/><path d="M1 1h20v4H1z" fill="#bbb"/><rect x="9" y="14" width="10" height="9" fill="#ddd" stroke="#333"/></svg></span>
      <span class="sc w19"><span class="caret white"></span></span>
    </div>
    <div class="sg"><span class="sc w32"><svg width="22" height="24" viewBox="0 0 22 24"><rect x="1" y="1" width="9" height="9" fill="none" stroke="#999" stroke-width="1.400"/><circle cx="15" cy="18" r="5" fill="none" stroke="#999" stroke-width="1.400"/><path d="m6 10 6 4" stroke="#999"/></svg></span></div>
    <div class="sg"><span class="sc w31"><svg width="26" height="26" viewBox="0 0 26 26"><circle cx="13" cy="13" r="11" fill="#1668c8" stroke="#4aa3ea" stroke-width="2.400"/><path d="m9 15 2 2 6-8" fill="none" stroke="#8cc4ef" stroke-width="1.500"/></svg></span></div>
    <div class="sg noborder">
      <span class="sc w30"><svg width="22" height="24" viewBox="0 0 22 24"><rect x="1" y="1" width="16" height="20" fill="#4e88c8"/><path d="M3 3h5v5H3z" fill="#e8e8e8"/><path d="M11 10 21 23H5z" fill="#f0c331"/></svg></span>
      <span class="sc w30"><svg width="20" height="24" viewBox="0 0 20 24"><rect x="2" y="5" width="16" height="18" fill="none" stroke="#e08a2c" stroke-width="2"/><path d="M7 1h6v6H7z" fill="none" stroke="#e08a2c" stroke-width="1.500"/><path d="M6 15h8" stroke="#e08a2c"/></svg></span>
    </div>
  </footer>

  <div class="taskbar">
    <div class="tsearch">
      <span class="tsearch-t">搜索</span>
      <svg class="doodle" width="80" height="40" viewBox="0 0 80 40"><path d="M1 12c5-1 9-3 13-9 3 3 7 5 11 3 3 4 1 12-5 16-5 2-11 1-14-3-1-3-3-5-5-7z" fill="none" stroke="#3b6a96" stroke-width="1.500"/><path d="M33 5c3-3 5-3 6-1M36 6v6" fill="none" stroke="#3fa24a" stroke-width="1.700"/><path d="m29 39 7-22 4 1-7 21z" fill="#b88332"/><path d="m36 17 3-8 3 9z" fill="#3b7fc0"/><path d="M67 0v12M61 6h12M62 1l10 10M72 1 62 11" stroke="#3f9bc8" stroke-width="1.700"/><path d="M57 11v11M51 16h11M52 12l9 9M61 12l-9 9M50 22v9M45 26h10M46 23l8 7M54 23l-8 7" stroke="#e2743a" stroke-width="1.700"/><path d="M70 14v10M65 19h10M66 15l8 8M74 15l-8 8" stroke="#e58f36" stroke-width="1.700"/><path d="M56 32c4-2 9 0 9 3s-4 5-8 4-5-4-4-6M60 24v9" fill="none" stroke="#3d3d3d" stroke-width="1.300"/></svg>
    </div>
    <span class="tv"><svg width="20" height="30" viewBox="0 0 20 30"><path d="M1 2h12M1 27h12M1 6h12M1 23h12M1 11h12v8H1zM18 6v5M18 19v5" stroke="#222" stroke-width="1.500" fill="none"/><rect x="17" y="13" width="3" height="3" fill="#222"/></svg></span>
    <span class="ta"><svg width="30" height="30" viewBox="0 0 32 32"><rect width="32" height="32" fill="#0db02b"/><ellipse cx="13" cy="13" rx="8.500" ry="7.500" fill="#fff"/><ellipse cx="21" cy="20" rx="7" ry="6" fill="#fff" stroke="#0db02b"/><path d="m8 18-1 4 5-2z" fill="#fff"/></svg></span>
    <span class="ta"><svg width="30" height="30" viewBox="0 0 32 32"><path d="M1 11 16 0l15 11v21H1z" fill="#1f76c4"/><path d="M1 11 16 20 31 11v21H1z" fill="#3fb0ee"/><path d="M7 6h18v8l-9 5-9-5z" fill="#d9ecfb"/></svg></span>
    <span class="ta"><svg width="30" height="30" viewBox="0 0 32 32"><path d="M2 4h11l3 3h14v21H2z" fill="#f1c23b"/><path d="M2 10h28v18H2z" fill="#fbd95a"/><path d="M10 19h12v9h-3v-6h-6v6h-3z" fill="#3d8fd8"/></svg></span>
    <span class="ta on"><svg width="30" height="32" viewBox="0 0 32 34"><path d="M1 18C1 7 9 1 17 1c8 0 14 5 14 13 0 3-4 5-8 5H11c0 5 4 8 9 8 4 0 8-1 10-3-3 6-8 9-14 9C7 33 1 27 1 18z" fill="#1278d0"/><path d="M11 19c0-6 4-10 8-10 3 0 4 3 4 5s-3 2-6 2z" fill="#47d0a6"/><path d="M1 18c0-6 5-8 10-8-3 2-5 5-4 9 1 6 5 11 10 12-9 2-16-4-16-13z" fill="#0e3f7a"/></svg></span>
    <span class="ta on act"><svg width="30" height="28" viewBox="0 0 32 30"><path d="M1 1h30v28H1z" fill="#c8404c"/><path d="M1 16h30v13H1z" fill="#a82a36"/><path d="M16 2 24 22l-8-5-8 5z" fill="#7d1420"/><path d="M12 26 16 14l4 12-4-3z" fill="#e6909a"/></svg></span>
    <span class="ta on"><svg width="29" height="30" viewBox="0 0 30 30"><rect width="30" height="30" rx="3" fill="#2265b0"/><rect x="3" y="3" width="24" height="24" rx="2" fill="#174f8f"/><text x="15" y="20" class="cadt">CAD</text></svg></span>
    <span class="ta"><svg width="30" height="28" viewBox="0 0 30 28"><path d="M0 2h7l4 15 4-11 4 11 4-15h7l-8 25h-6l-1-4-2 4H8z" fill="#e8322c"/></svg></span>
    <span class="ta on"><svg width="30" height="28" viewBox="0 0 30 28"><path d="M0 2h7l4 15 4-11 4 11 4-15h7l-8 25h-6l-1-4-2 4H8z" fill="#e8322c"/></svg></span>
    <span class="ta on"><svg width="27" height="30" viewBox="0 0 30 46" preserveAspectRatio="none"><ellipse cx="15" cy="23" rx="14" ry="22" fill="#8a8f86"/><path d="M15 1c8 0 14 10 14 22H15z" fill="#c9cdc6"/><path d="M1 23C1 11 7 1 15 1v22z" fill="#4aa146"/><path d="M15 23h14c0 12-6 22-14 22z" fill="#3c3c36"/></svg></span>
    <div class="tray">
      <svg width="18" height="12" viewBox="0 0 18 12"><path d="M1 11 9 2l8 9" fill="none" stroke="#333" stroke-width="1.500"/></svg>
      <svg class="tr-mic" width="16" height="28" viewBox="0 0 16 28"><rect x="3" y="0" width="10" height="20" rx="5" fill="#222"/><path d="M1 14c0 5 3 7 7 7s7-2 7-7M8 21v5M3 27h10" fill="none" stroke="#222" stroke-width="1.500"/></svg>
      <svg class="tr-qq" width="18" height="24" viewBox="0 0 18 24"><ellipse cx="9" cy="9" rx="7" ry="8.500" fill="#222"/><ellipse cx="9" cy="16" rx="7" ry="7" fill="#fff" stroke="#222"/><path d="M2 12c4 3 10 3 14 0l1 3H1z" fill="#e03c31"/><path d="M3 21h5M10 21h5" stroke="#f0a822" stroke-width="3"/></svg>
      <div class="clock"><span class="clock-t">18:49</span><span class="clock-d">2023-04-</span></div>
    </div>
  </div>

  <!-- floating notification balloon and overlays -->
  <div class="balloon">
    <div class="bl-title"><svg width="16" height="18" viewBox="0 0 16 18"><ellipse cx="8" cy="9" rx="7" ry="8" fill="#2a6bc6"/><rect x="6.800" y="7" width="2.400" height="7" fill="#fff"/><rect x="6.800" y="3.500" width="2.400" height="2.400" fill="#fff"/></svg><span>未协调的新图层</span></div>
    <div class="bl-body">发现可能需要协调的新图层，请</div>
    <div class="bl-link">在图层特性管理器中查看未协调</div>
  </div>
  <svg class="overlay" width="1728" height="1080" viewBox="0 0 1728 1080">
    <defs>
      <linearGradient id="pl" x1="0" y1="0" x2="0" y2="1"><stop offset="0" stop-color="#f4f6fa"/><stop offset=".55" stop-color="#c9def7"/><stop offset="1" stop-color="#e8eef8"/></linearGradient>
    </defs>
    <path d="M1128 963V971M1128 966H1132M1186 958V971M1190 960 1194 966M727 960V971M744 963V971M769 960V971M826 960V971" class="ov-w"/>
    <path d="M1201 971 1244 951 1294 949 1349 948 1415 953" class="ov-g"/>
    <path d="M1214 970 1247 956 1291 954" class="ov-gd"/>
    <path d="M1261 970 1291 950" class="ov-b"/>
    <path d="M1294 935V950" class="ov-w"/>
    <path d="M1366 916V982L1424 949Z" class="play"/>
    <path d="M1464 958 1520 938A30 26 0 0 0 1462 951 30 26 0 0 0 1492 977H1505" class="elogo"/>
    <rect x="1544" y="934" width="8" height="18" class="ov-m"/><rect x="1572" y="936" width="6" height="16" class="ov-m"/>
    <rect x="1607" y="935" width="5" height="14" class="ov-m"/><rect x="1632" y="938" width="7" height="5" class="ov-m"/>
    <rect x="1655" y="937" width="6" height="6" class="ov-m"/><rect x="1680" y="936" width="5" height="15" class="ov-m"/>
    <rect x="1530" y="963" width="6" height="6" class="ov-m"/><rect x="1570" y="961" width="5" height="7" class="ov-m"/><rect x="1620" y="962" width="5" height="6" class="ov-m"/>
  </svg>
</div>
</body>
</html>
```

FILE: styles.css
```css
* { box-sizing: border-box; }
html, body { margin: 0; padding: 0; background: #000; }
body { width: 1728px; height: 1080px; overflow: hidden; }
.defs { position: absolute; }
.app {
  position: relative; width: 1728px; height: 1080px; overflow: hidden;
  display: flex; flex-direction: column;
  font-family: "Open Sans", "Noto Sans CJK SC", sans-serif; color: #dcdcdc; font-size: 15px;
}
.caret { display: inline-block; width: 0; height: 0; border-left: 3.5px solid transparent; border-right: 3.5px solid transparent; border-top: 5px solid #cfcfcf; flex: none; }
.caret.white { border-left-width: 4.5px; border-right-width: 4.5px; border-top: 7px solid #eee; }
svg { display: block; flex: none; }

/* title bar */
.titlebar { height: 29px; display: flex; flex: none; border-bottom: 1px solid #2c2c2c; }
.qat { width: 510px; position: relative; display: flex; align-items: center; background: linear-gradient(#6e6e6e, #4c4c4c); flex: none; }
.qi { display: flex; width: 24px; justify-content: center; margin-right: 0; flex: none; }
.q1 { margin-left: 12px; }
.q2 { margin-left: 5px; }
.q3 { margin-left: 7px; }
.q4 { margin-left: 5px; }
.q5 { margin-left: 6px; }
.q6 { margin-left: 6px; }
.q7 { margin-left: 7px; }
.wscombo { width: 224px; height: 28px; margin-left: 5px; display: flex; align-items: center; padding-left: 6px; background: #4a4a4a; border: 1px solid #2f2f2f; flex: none; color: #e2e2e2; }
.wstext { margin-left: 5px; width: 181px; white-space: nowrap; }
.q8 { margin-left: 4px; }
.q9 { margin-left: 3px; }
.q10 { margin-left: 6px; width: 28px; }
.downbar { width: 10px; height: 11px; margin-left: 5px; border-top: 2px solid #ddd; position: relative; }
.downbar::after { content: ""; position: absolute; left: 0; top: 2px; border-left: 5px solid transparent; border-right: 5px solid transparent; border-top: 7px solid #ddd; }
.doctitle { width: 553px; flex: none; background: #fff; color: #1a1a1a; font-size: 16.6px; display: flex; align-items: center; padding-left: 44px; white-space: nowrap; }
.dt-gap { margin-left: 19px; }
.searchzone { width: 556px; flex: none; display: flex; align-items: center; background: linear-gradient(#6e6e6e, #4c4c4c); }
.tri-r { width: 0; height: 0; margin-left: 6px; border-top: 6px solid transparent; border-bottom: 6px solid transparent; border-left: 6px solid #ddd; flex: none; }
.keybox { width: 225px; height: 28px; margin-left: 5px; padding-left: 5px; background: #585858; border: 1px solid #3a3a3a; font-style: italic; color: #a8a8a8; font-size: 14px; line-height: 26px; white-space: nowrap; flex: none; }
.sz-ico { display: flex; justify-content: center; flex: none; }
.sz1 { margin-left: 3px; width: 20px; }
.sz2 { margin-left: 10px; width: 24px; }
.login { margin-left: 4px; width: 32px; color: #e8e8e8; flex: none; white-space: nowrap; }
.sz3 { margin-left: 74px; }
.sz4 { margin-left: 12px; width: 20px; }
.sz5 { margin-left: 8px; width: 24px; }
.sz6 { margin-left: 4px; }
.sz-sep { width: 1px; height: 22px; margin-left: 10px; background: #777; flex: none; }
.sz7 { margin-left: 9px; width: 24px; }
.sz8 { margin-left: 6px; }
.helpq { font: bold 16px "Liberation Sans", sans-serif; text-anchor: middle; fill: #2a62ac; }
.winctl { flex: 1; background: #fff; position: relative; }
.mindash { position: absolute; left: 52px; top: 13px; width: 11px; height: 1px; background: #555; }
.maxbox { position: absolute; left: 105px; top: 9px; width: 11px; height: 11px; border: 1px solid #555; }

/* tabs */
.tabs { height: 24px; flex: none; display: flex; align-items: center; background: #474747; border-bottom: 1px solid #333; color: #cfcfcf; white-space: nowrap; padding-top: 1px; }
.tabhome { width: 10px; height: 24px; margin-right: 15px; background: #555; border-right: 1px solid #2f2f2f; flex: none; }
.tab { flex: none; }
.t1, .t2 { width: 54px; }
.t3 { width: 70px; }
.t4 { width: 84px; }
.t5 { width: 62px; }
.t6 { width: 84px; }
.t7 { width: 84px; }
.t8 { width: 135px; }
.tabpill { margin-right: 7px; }

/* ribbon */
.ribbon { height: 124px; flex: none; display: flex; background: #4f4f4f; }
.panel { flex: none; display: flex; flex-direction: column; border-right: 1px solid #3c3c3c; box-shadow: inset -1px 0 0 #5c5c5c; }
.pbody { height: 100px; display: flex; overflow: hidden; flex: none; }
.ptitle { flex: 1; background: #444; display: flex; align-items: center; justify-content: center; gap: 6px; position: relative; color: #dadada; }
.p-draw .ptitle { padding-right: 100px; }
.p-prop .ptitle { padding-right: 18px; }
.launch { position: absolute; right: 5px; top: 8px; }
.p-draw { width: 167px; } .p-mod { width: 284px; } .p-lay { width: 315px; } .p-ann { width: 196px; }
.p-blk { width: 168px; } .p-prop { width: 305px; } .p-grp { width: 85px; } .p-util { width: 96px; }
.p-clip { width: 95px; } .p-view { width: 17px; border-right: 0; box-shadow: none; overflow: hidden; }
.p-view .ptitle { justify-content: flex-start; padding-left: 1px; white-space: nowrap; }

.big { display: flex; flex-direction: column; align-items: center; flex: none; padding-top: 7px; }
.bico { height: 42px; display: flex; align-items: flex-start; justify-content: center; }
.blabel { margin-top: 3px; height: 22px; line-height: 22px; white-space: nowrap; text-align: center; }
.blabel.two { height: auto; margin-top: 3px; line-height: 21px; }
.big > .caret { margin-top: 3px; }
.b-pl { width: 44px; margin-left: -41px; }
.b-circle { width: 56px; }
.b-circle .bico { padding-top: 2px; }
.b-arc { width: 50px; }
.b-arc .bico { padding-top: 1px; }
.b-lay { width: 54px; padding-left: 6px; }
.b-a { width: 64px; }
.bigA { font: 48px/44px "Liberation Sans", sans-serif; color: #d4d4d4; }
.b-dim { width: 42px; }
.b-ins { width: 54px; }
.b-match { width: 54px; }
.b-grp { width: 53px; }
.b-meas { width: 62px; }
.b-meas .bico { padding-top: 8px; }
.b-paste { width: 62px; }

.i { width: 20px; height: 20px; flex: none; }
.rows { display: grid; grid-auto-rows: 31px; padding-top: 4px; }
.tool { display: flex; align-items: center; gap: 7px; white-space: nowrap; }
.r-draw { padding-left: 9px; }
.ca-draw { margin-left: 3px; }
.r-mod { grid-template-columns: 74px 74px 96px 22px; padding-left: 8px; }
.ca-mod { margin-left: 15px; }
.r-ann { padding-left: 8px; }
.ca-ann { margin-left: 11px; }
.r-blk { padding-left: 2px; }
.ca-blk { margin-left: 8px; }

.laycol { margin-left: -2px; padding-top: 6px; width: 260px; flex: none; }
.laycombo { height: 28px; border: 1px solid #333; background: #454545; display: flex; align-items: center; position: relative; padding-bottom: 1px; }
.lc1 { margin-left: 8px; }
.lc2 { margin-left: 7px; }
.lc3 { margin-left: 3px; }
.lc-sq { width: 18px; height: 15px; margin-left: 10px; background: #fff; }
.lc-t { margin-left: 6px; }
.lc-c { position: absolute; right: 3px; top: 10px; }
.layrow { height: 31px; display: grid; grid-template-columns: 28px 33px 31px 29px 26px auto; align-items: center; padding-left: 4px; white-space: nowrap; margin-top: 0; }
.laycombo + .layrow { margin-top: 0; }

.pswatch { width: 20px; padding-top: 5px; margin-right: 3px; display: flex; flex-direction: column; gap: 5px; flex: none; }
.combos { width: 224px; padding-top: 7px; display: flex; flex-direction: column; gap: 3px; flex: none; }
.combo { height: 27px; border: 1px solid #333; background: #454545; display: flex; align-items: center; position: relative; }
.bluesq { width: 20px; height: 18px; margin-left: 14px; background: #0000f0; border: 1px solid #5e76c8; }
.cb-t { margin-left: 11px; }
.cb-line { width: 75px; height: 1px; background: #e8e8e8; margin-left: 10px; }
.cb-bl { margin-left: 1px; font-size: 15px; }
.cb-c { position: absolute; right: 2px; top: 9px; }

.grpcol, .utilcol, .clipcol { display: flex; flex-direction: column; align-items: center; flex: none; }
.grpcol { width: 27px; padding-top: 9px; gap: 8px; }
.grp-on { width: 27px; height: 26px; background: #3b6ea8; border: 1px solid #6f97c4; display: flex; align-items: center; justify-content: center; margin-top: 3px; }
.utilcol { width: 20px; margin-left: 3px; padding-top: 9px; gap: 11px; }
.clipcol { width: 20px; margin-left: 2px; padding-top: 11px; gap: 11px; }
.strip { height: 3px; flex: none; background: #6a6a6a; }

/* workspace */
.workspace { height: 792px; flex: none; display: flex; }
.palette { width: 242px; flex: none; background: #5c5c5c; padding-right: 13px; overflow: hidden; }
.pal-top { height: 68px; padding-top: 40px; display: flex; align-items: flex-start; position: relative; background: linear-gradient(#5a5a5a 0, #5a5a5a 27px, #5e5e5e 27px); }
.pal-combo { width: 156px; height: 28px; background: linear-gradient(#6c6c6c, #555); border: 1px solid #3d3d3d; border-left: 0; position: relative; }
.pal-drop { position: absolute; right: 0; top: 0; width: 18px; height: 26px; border-left: 1px solid #3d3d3d; display: flex; align-items: center; justify-content: center; }
.pal-i1 { margin: 3px 0 0 17px; }
.pal-i2 { margin: 5px 0 0 7px; }
.pal-i3 { margin: 2px 0 0 6px; }
.sec-h { height: 27px; background: #464646; border-top: 1px solid #383838; border-bottom: 1px solid #383838; display: flex; align-items: center; justify-content: space-between; padding-right: 9px; color: #eee; font-size: 17px; overflow: hidden; }
.sec-h b { font-size: 15px; }
.sh-l { margin-left: -64px; font-weight: 700; white-space: nowrap; }
.sec-gap { margin-top: 3px; }
.sec-a { margin-top: 3px; height: 28px; }
.sec-b { margin-top: 4px; }
.prow { height: 27px; display: grid; grid-template-columns: 71px 1fr; align-items: center; border-bottom: 1px solid #525252; position: relative; }
.pk { margin-left: -59px; white-space: nowrap; font-size: 18px; line-height: 26px; width: 130px; color: #e6e6e6; height: 26px; }
.pv { height: 26px; border-left: 1px solid #525252; padding-left: 2px; background: #5c5c5c; font-size: 20px; line-height: 26px; color: #f2f2f2; display: flex; align-items: center; white-space: nowrap; z-index: 1; }
.prow .pk { position: relative; }
.dim { color: #a2a2a2; }
.pblue { width: 10px; height: 10px; background: #0000e6; border: 1px solid #2a4bd0; border-radius: 2px; margin-right: 8px; flex: none; }
.pline { width: 62px; height: 1px; background: #f0f0f0; margin: 0 7px 0 2px; flex: none; }
.pcalc { position: absolute; right: 7px; top: 5px; z-index: 2; }

.canvas { flex: 1; background: #000; position: relative; overflow: hidden; }
.draw { background: #000; }
.vplabel { font: 13px "Noto Sans CJK SC", sans-serif; fill: #c8c8c8; }
.frame-thin path { fill: none; stroke: #7e7e7e; stroke-width: 1.2; }
.frame-bold path { fill: none; stroke: #8a8a8a; stroke-width: 3; }
.num { fill: none; stroke: #888; stroke-width: 1.4; }
.numt { font: 12px "Open Sans", sans-serif; fill: #f0f0f0; text-anchor: middle; }
.ring { fill: none; stroke: #2a2a2a; stroke-width: 14; }
.west { font: 18px "Noto Sans CJK SC", sans-serif; fill: #8e8e8e; }
.cube { fill: #bdbdbd; }
.vbtn { fill: #777; }
.vbtnt { font: 10px "Open Sans", sans-serif; fill: #ddd; }
.frag { fill: none; stroke: #a8a8a8; stroke-width: 1; }
.ucs path, .ucs rect { fill: none; stroke: #eee; stroke-width: 1; }
.ucs2 { fill: none; stroke: #eee; stroke-width: 1; }
.g { fill: none; stroke: #96d85a; stroke-width: 1.4; }
.gd { fill: none; stroke: #b2de80; stroke-width: 1.2; stroke-dasharray: 9 4; }
.b { fill: none; stroke: #4593c4; stroke-width: 1.3; }
.sel { fill: none; stroke: #1a38c4; stroke-width: 5.500; }
.sel2 { fill: none; stroke: #10209a; stroke-width: 2; }
.patch { fill: #2c6fc4; }
.grip { fill: #0a78f0; }
.w { fill: none; stroke: #eee; stroke-width: 1; }
.w2 { fill: none; stroke: #fff; stroke-width: 1.3; }
.dt { font: 12px "Liberation Sans", sans-serif; fill: #f2f2f2; white-space: pre; }
.ch { fill: none; stroke: #fff; stroke-width: 1; }
.chb { fill: none; stroke: #fff; stroke-width: 1; }
.clk { fill: #3f9bf0; stroke: #f2f6fa; stroke-width: 3; }
.clk2 { fill: #7cbcf6; }
.clkt { font: 15px "Open Sans", sans-serif; fill: #e8f4ff; }

.cmd { position: absolute; left: 394px; top: 756px; width: 793px; height: 33px; display: flex; }
.cmd-dark { width: 68px; background: #474747; border-radius: 3px 0 0 3px; display: flex; align-items: center; padding-left: 17px; gap: 8px; position: relative; flex: none; }
.cmd-grip { position: absolute; left: 4px; top: 8px; width: 3px; height: 18px; background: repeating-linear-gradient(#8a8a8a 0 2px, transparent 2px 5px); }
.cmd-light { flex: 1; background: #b5b5b5; display: flex; align-items: center; }
.cmd-ico { width: 24px; height: 22px; margin-left: 5px; background: #8f8f8f; border: 1px solid #7c7c7c; border-radius: 2px; display: flex; align-items: center; justify-content: center; }
.cmd-c { margin-left: 3px; border-top-color: #555; }
.cmd-t { margin-left: 9px; font-size: 20px; font-style: italic; color: #808080; white-space: nowrap; }

/* layout tabs */
.layouttabs { height: 24px; flex: none; background: #3c3c3c; display: flex; position: relative; border-top: 1px solid #2f2f2f; }
.lt-tab { width: 44px; height: 22px; background: #555; color: #b8b8b8; clip-path: polygon(0 0, 100% 0, 84% 100%, 0 100%); direction: rtl; overflow: hidden; font-size: 15px; line-height: 22px; white-space: nowrap; padding-right: 15px; }
.lt-plus { width: 30px; height: 21px; margin-left: 6px; margin-top: 1px; background: #5a5a5a; border-radius: 6px; clip-path: polygon(18% 0, 100% 0, 82% 100%, 0 100%); color: #ddd; font-weight: 700; font-size: 18px; line-height: 18px; text-align: center; }

/* status bar */
.statusbar { height: 34px; flex: none; background: #3c3c3c; display: flex; padding-left: 68px; align-items: stretch; }
.sg { display: flex; align-items: center; border: 1px solid #666; border-left-color: #777; background: #4a4a4a; margin-right: 1px; flex: none; height: 34px; white-space: nowrap; }
.sg > .sc:first-child { margin-left: -1px; }
.sg > .sc:last-child { margin-right: -1px; }
.noborder { border-right: 0; margin-right: 0; }
.coords { justify-content: flex-end; padding-right: 7px; font-size: 15px; letter-spacing: -.5px; color: #e8e8e8; }
.model { justify-content: center; color: #fff; font-weight: 700; }
.w228 { width: 227px; } .w36 { width: 36px; }
.sc { display: flex; align-items: center; justify-content: center; flex: none; height: 32px; }
.sc.bl { border-left: 1px solid #666; }
.w16 { width: 16px; } .w17 { width: 17px; } .w18 { width: 18px; } .w19 { width: 19px; } .w22 { width: 22px; } .w23 { width: 23px; }
.w26 { width: 26px; } .w27 { width: 27px; } .w28 { width: 28px; } .w29 { width: 29px; } .w30 { width: 30px; } .w31 { width: 31px; }
.w32 { width: 32px; } .w33 { width: 33px; } .w34 { width: 34px; } .w68 { width: 68px; } .w74 { width: 74px; } .w177 { width: 177px; }
.stxt { color: #e4e4e4; font-size: 15px; }
.zoomt { font-size: 14px; letter-spacing: -.2px; }
.stxt.left { justify-content: flex-start; padding-left: 6px; }
.stxt.left3 { justify-content: flex-start; padding-left: 3px; }

/* taskbar */
.taskbar { height: 50px; flex: none; background: #e6deea; display: flex; align-items: center; color: #222; }
.tsearch { width: 323px; height: 48px; background: #fff; display: flex; align-items: center; padding-left: 14px; flex: none; }
.tsearch-t { font-size: 20px; width: 217px; }
.tv { width: 64px; display: flex; justify-content: center; flex: none; }
.ta { width: 62px; height: 50px; display: flex; align-items: center; justify-content: center; position: relative; flex: none; }
.ta.on::after { content: ""; position: absolute; left: 7px; right: 7px; bottom: 0; height: 3px; background: #1fb377; }
.ta.act { background: #f2eef2; }
.cadt { font: bold 12px "Liberation Sans", sans-serif; fill: #b9d6f2; text-anchor: middle; }
.tray { margin-left: auto; display: flex; align-items: center; width: 157px; flex: none; }
.tr-mic { margin-left: 13px; }
.tr-qq { margin-left: 14px; }
.clock { margin-left: 15px; display: flex; flex-direction: column; align-items: flex-start; white-space: nowrap; font-size: 16px; line-height: 24px; }
.clock-t { margin-left: 23px; }

/* floating */
.balloon { position: absolute; left: 1499px; top: 893px; width: 240px; height: 97px; background: #fdfde0; border-radius: 10px; padding: 8px 0 0 13px; color: #111; z-index: 5; }
.balloon::after { content: ""; position: absolute; right: 6px; bottom: -10px; border-left: 12px solid transparent; border-top: 10px solid #fdfde0; }
.bl-title { display: flex; align-items: center; gap: 10px; font-size: 16px; font-weight: 500; height: 24px; white-space: nowrap; margin-left: -4px; }
.bl-body { margin-top: 6px; font-size: 17px; height: 26px; line-height: 26px; white-space: nowrap; }
.bl-link { font-size: 16px; color: #1a2fb0; text-decoration: underline; white-space: nowrap; line-height: 24px; }
.overlay { position: absolute; left: 0; top: 0; z-index: 6; pointer-events: none; }
.ov-w { fill: none; stroke: #fff; stroke-width: 1; }
.ov-g { fill: none; stroke: #e6efdc; stroke-width: 1.3; }
.ov-gd { fill: none; stroke: #e6efdc; stroke-width: 1.1; stroke-dasharray: 8 4; }
.ov-b { fill: none; stroke: #bcdce6; stroke-width: 1; }
.play { fill: none; stroke: url(#pl); stroke-width: 15; stroke-linejoin: round; }
.elogo { fill: none; stroke: #fff; stroke-width: 7; stroke-linecap: round; }
.ov-m { fill: #fff; }
```
